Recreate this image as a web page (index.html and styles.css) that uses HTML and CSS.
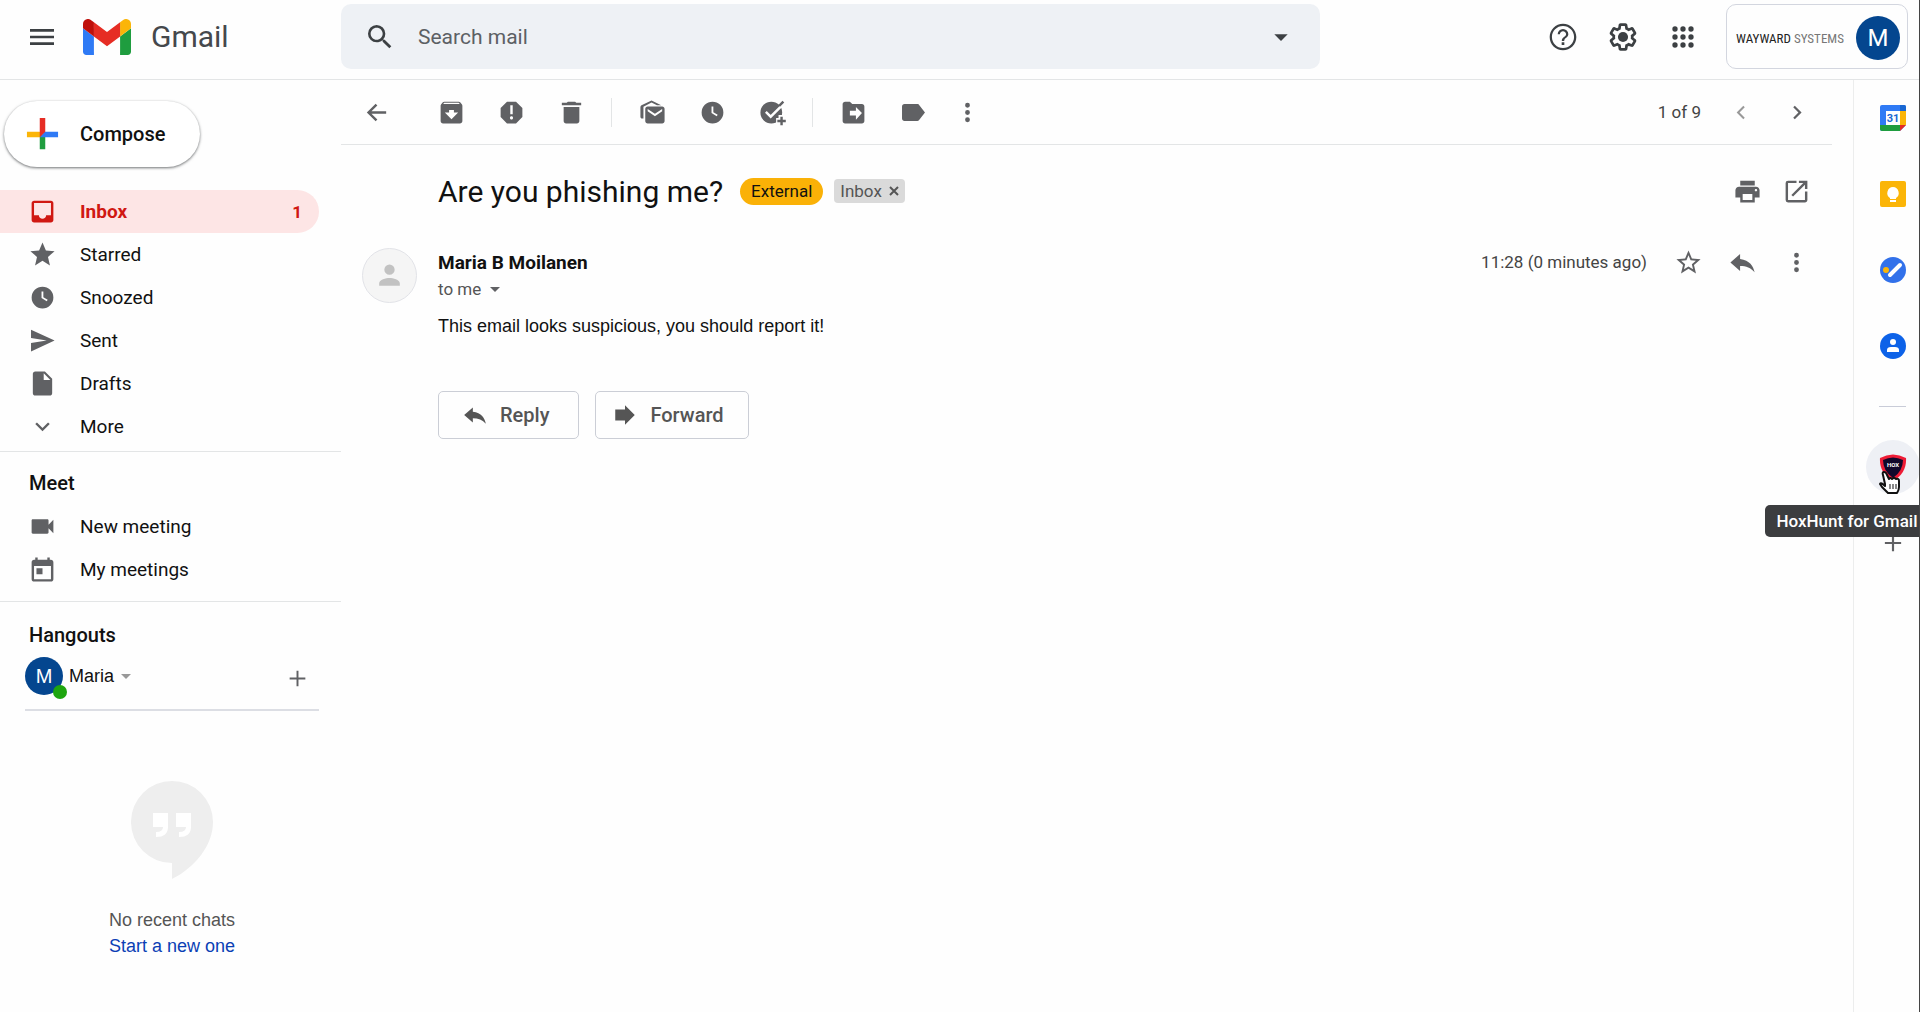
FILE: index.html
```html
<!DOCTYPE html>
<html lang="en">
<head>
    <meta charset="UTF-8">
    <meta name="viewport" content="width=device-width, initial-scale=1.0">
    <title>Are you phishing me? - Gmail</title>
    <link rel="stylesheet" href="styles.css">
</head>
<body>
    <!-- Top bar -->
    <header class="topbar">
        <div class="brand">
            <button class="icon-btn" aria-label="Main menu">
                <svg class="icon-lg" viewBox="0 0 24 24"><path d="M3 18h18v-2H3v2zm0-5h18v-2H3v2zm0-7v2h18V6H3z"/></svg>
            </button>
            <a class="logo" href="#">
                <svg class="logo-mark" viewBox="52 42 88 66">
                    <path fill="#2f7af5" d="M58 108h14V74L52 59v43c0 3.320 2.690 6 6 6"/>
                    <path fill="#1f9d3f" d="M120 108h14c3.320 0 6-2.690 6-6V59l-20 15"/>
                    <path fill="#fbb508" d="M120 48v26l20-15v-8c0-7.420-8.470-11.650-14.400-7.200"/>
                    <path fill="#e62d24" d="M72 74V48l24 18 24-18v26L96 92"/>
                    <path fill="#bf100b" d="M52 51v8l20 15V48l-5.600-4.200c-5.940-4.450-14.400-.22-14.400 7.200"/>
                </svg>
                <span>Gmail</span>
            </a>
        </div>
        <form class="search">
            <button class="icon-btn" type="button" aria-label="Search">
                <svg class="icon-lg" viewBox="0 0 24 24"><path d="M15.500 14h-.79l-.28-.27A6.470 6.470 0 0 0 16 9.500 6.500 6.500 0 1 0 9.500 16c1.610 0 3.090-.59 4.230-1.570l.27.28v.79l5 4.990L20.490 19l-4.990-5zm-6 0C7.010 14 5 11.990 5 9.500S7.010 5 9.500 5 14 7.010 14 9.500 11.990 14 9.500 14z"/></svg>
            </button>
            <input type="text" placeholder="Search mail" aria-label="Search mail">
            <button class="icon-btn" type="button" aria-label="Show search options">
                <svg class="icon-lg" viewBox="0 0 24 24"><path d="M7 10l5 5 5-5z"/></svg>
            </button>
        </form>
        <div class="top-actions">
            <button class="icon-btn" aria-label="Support">
                <svg class="icon-lg" viewBox="0 0 24 24"><path d="M11 18h2v-2h-2v2zm1-16C6.480 2 2 6.480 2 12s4.480 10 10 10 10-4.480 10-10S17.520 2 12 2zm0 18.300c-4.600 0-8.300-3.700-8.300-8.300S7.400 3.700 12 3.700s8.300 3.700 8.300 8.300-3.700 8.300-8.300 8.300zM12 6a4 4 0 0 0-4 4h1.700c0-1.270 1.030-2.300 2.300-2.300s2.300 1.030 2.300 2.300c0 2-3.200 1.900-3.200 5h1.800c0-2.250 3.100-2.500 3.100-5a4 4 0 0 0-4-4z"/></svg>
            </button>
            <button class="icon-btn" aria-label="Settings">
                <svg class="icon-lg" viewBox="0 0 24 24"><path d="M13.850 22.250h-3.700c-.74 0-1.360-.54-1.450-1.270l-.27-1.890c-.27-.14-.53-.29-.79-.46l-1.800.72c-.7.26-1.470-.03-1.810-.65L2.200 15.530c-.35-.66-.2-1.440.36-1.880l1.530-1.190c-.01-.15-.02-.3-.02-.46 0-.15.010-.31.020-.46l-1.520-1.190c-.59-.45-.74-1.260-.37-1.880l1.850-3.190c.34-.62 1.110-.9 1.790-.63l1.810.73c.26-.17.52-.32.78-.46l.27-1.910c.09-.7.710-1.250 1.440-1.250h3.700c.74 0 1.360.54 1.450 1.270l.27 1.890c.27.14.53.29.79.46l1.800-.72c.71-.26 1.480.03 1.820.65l1.840 3.180c.36.66.2 1.440-.36 1.880l-1.520 1.190c.01.15.02.3.02.46s-.01.31-.02.46l1.520 1.190c.56.45.72 1.230.37 1.860l-1.860 3.220c-.34.62-1.110.9-1.800.63l-1.800-.72c-.26.17-.52.32-.78.46l-.27 1.910c-.1.680-.72 1.220-1.460 1.220zm-3.230-2h2.760l.37-2.550.53-.22c.44-.18.88-.44 1.340-.78l.45-.34 2.380.96 1.380-2.400-2.030-1.580.07-.56c.03-.26.06-.51.06-.78s-.03-.53-.06-.78l-.07-.56 2.030-1.580-1.390-2.400-2.390.96-.45-.35c-.42-.32-.87-.58-1.330-.77l-.52-.22-.37-2.550h-2.760l-.37 2.550-.53.210c-.44.190-.88.440-1.340.79l-.45.330-2.380-.95-1.390 2.390 2.030 1.580-.07.56a7 7 0 0 0-.06.79c0 .26.02.53.06.78l.07.56-2.030 1.580 1.380 2.400 2.390-.96.45.35c.43.33.86.58 1.330.77l.53.220.38 2.550z"/><circle cx="12" cy="12" r="3.800"/></svg>
            </button>
            <button class="icon-btn" aria-label="Google apps">
                <svg class="icon-lg" viewBox="0 0 24 24"><path d="M6 8a2 2 0 1 0 0-4 2 2 0 0 0 0 4zm6 12a2 2 0 1 0 0-4 2 2 0 0 0 0 4zm-6 0a2 2 0 1 0 0-4 2 2 0 0 0 0 4zm0-6a2 2 0 1 0 0-4 2 2 0 0 0 0 4zm6 0a2 2 0 1 0 0-4 2 2 0 0 0 0 4zm6-6a2 2 0 1 0 0-4 2 2 0 0 0 0 4zm-6 0a2 2 0 1 0 0-4 2 2 0 0 0 0 4zm6 6a2 2 0 1 0 0-4 2 2 0 0 0 0 4zm0 6a2 2 0 1 0 0-4 2 2 0 0 0 0 4z"/></svg>
            </button>
        </div>
        <button class="account">
            <span class="company"><b>WAYWARD</b> SYSTEMS</span>
            <span class="avatar">M</span>
        </button>
    </header>

    <div class="page">
        <!-- Left navigation -->
        <aside class="sidebar">
            <button class="compose">
                <svg viewBox="0 0 36 36"><path fill="#1f9d3f" d="M15 16v18h6V20z"/><path fill="#2f7af5" d="M35 15H20l-5 6h20z"/><path fill="#fbb508" d="M1 15v6h14l2-3-2-3z"/><path fill="#e62d24" d="M15 0v21l6-6V0z"/></svg>
                Compose
            </button>
            <nav class="nav">
                <a class="nav-item active" href="#">
                    <svg class="icon" viewBox="0 0 24 24"><path d="M19 3H5c-1.100 0-2 .9-2 2v14c0 1.100.9 2 2 2h14c1.100 0 2-.9 2-2V5c0-1.100-.9-2-2-2zm0 12h-4c0 1.660-1.350 3-3 3s-3-1.340-3-3H5V5h14v10z"/></svg>
                    <span>Inbox</span><span class="count">1</span>
                </a>
                <a class="nav-item" href="#">
                    <svg class="icon" viewBox="0 0 24 24"><path d="M12 17.270L18.180 21l-1.640-7.030L22 9.240l-7.190-.61L12 2 9.190 8.630 2 9.240l5.460 4.730L5.820 21z"/></svg>
                    <span>Starred</span>
                </a>
                <a class="nav-item" href="#">
                    <svg class="icon" viewBox="0 0 24 24"><path fill-rule="evenodd" d="M12 3a9 9 0 1 0 0 18 9 9 0 0 0 0-18zm-.8 4v5.500l4.300 2.600.8-1.200-3.600-2.200V7z"/></svg>
                    <span>Snoozed</span>
                </a>
                <a class="nav-item" href="#">
                    <svg class="icon" viewBox="0 0 24 24"><path d="M2.500 21L22 12 2.500 3v7l13 2-13 2z"/></svg>
                    <span>Sent</span>
                </a>
                <a class="nav-item" href="#">
                    <svg class="icon" viewBox="0 0 24 24"><path d="M6 2c-1.100 0-2 .9-2 2v16c0 1.100.9 2 2 2h12c1.100 0 2-.9 2-2V8l-6-6H6zm7 7V3.500L18.500 9H13z"/></svg>
                    <span>Drafts</span>
                </a>
                <a class="nav-item" href="#">
                    <svg class="icon" viewBox="0 0 24 24"><path d="M16.590 8.590L12 13.170 7.410 8.590 6 10l6 6 6-6z"/></svg>
                    <span>More</span>
                </a>
            </nav>

            <section class="side-section">
                <h2>Meet</h2>
                <a class="nav-item" href="#">
                    <svg class="icon" viewBox="0 0 24 24"><path d="M17 10.500V7c0-.55-.45-1-1-1H4c-.55 0-1 .45-1 1v10c0 .55.45 1 1 1h12c.55 0 1-.45 1-1v-3.500l4 4v-11l-4 4z"/></svg>
                    <span>New meeting</span>
                </a>
                <a class="nav-item" href="#">
                    <svg class="icon" viewBox="0 0 24 24"><path d="M19 4h-1V2h-2v2H8V2H6v2H5c-1.110 0-2 .9-2 2v14c0 1.100.89 2 2 2h14c1.100 0 2-.9 2-2V6c0-1.100-.9-2-2-2zm0 16H5V9h14v11zM7 11h5v5H7z"/></svg>
                    <span>My meetings</span>
                </a>
            </section>

            <section class="side-section hangouts">
                <h2>Hangouts</h2>
                <div class="chat-user">
                    <span class="avatar small">M<i class="status"></i></span>
                    <span class="chat-name">Maria</span>
                    <i class="caret light"></i>
                    <button class="icon-btn" aria-label="New conversation">
                        <svg class="icon" viewBox="0 0 24 24"><path d="M18.500 12.800h-5.700v5.700h-1.600v-5.700H5.500v-1.600h5.700V5.500h1.600v5.700h5.700z"/></svg>
                    </button>
                </div>
                <div class="no-chats">
                    <svg viewBox="0 0 82 98"><path fill="#eeeeee" d="M41 0a41 41 0 1 0 0 82v16c22-11 41-33 41-57A41 41 0 0 0 41 0z"/><path fill="#fff" d="M22 32h15v14q0 10-12 10v-5q7 0 7-5H22zM45 32h15v14q0 10-12 10v-5q7 0 7-5H45z"/></svg>
                    <p>No recent chats</p>
                    <a href="#">Start a new one</a>
                </div>
            </section>
        </aside>

        <!-- Opened conversation -->
        <main class="mail">
            <div class="toolbar">
                <button class="icon-btn back" aria-label="Back to Inbox">
                    <svg class="icon" viewBox="0 0 24 24"><path d="M20 11H7.830l4.880-4.880L11.300 4.700 4 12l7.300 7.300 1.410-1.410L7.830 13H20z"/></svg>
                </button>
                <div class="group">
                    <button class="icon-btn" aria-label="Archive">
                        <svg class="icon" viewBox="0 0 24 24"><path d="M20.540 5.230l-1.390-1.680C18.880 3.210 18.470 3 18 3H6c-.47 0-.88.21-1.160.55L3.460 5.230C3.170 5.570 3 6.020 3 6.500V19c0 1.100.9 2 2 2h14c1.100 0 2-.9 2-2V6.500c0-.48-.17-.93-.46-1.270zM12 17.500L6.500 12H10v-2h4v2h3.500L12 17.500zM5.120 5l.81-1h12l.94 1H5.120z"/></svg>
                    </button>
                    <button class="icon-btn" aria-label="Report spam">
                        <svg class="icon" viewBox="0 0 24 24"><path d="M15.730 3H8.270L3 8.270v7.460L8.270 21h7.460L21 15.730V8.270L15.730 3zM12 17.800c-.72 0-1.300-.58-1.300-1.300s.58-1.300 1.300-1.300 1.300.58 1.300 1.300-.58 1.300-1.300 1.300zm1-4.300h-2V6h2v7.500z"/></svg>
                    </button>
                    <button class="icon-btn" aria-label="Delete">
                        <svg class="icon" viewBox="0 0 24 24"><path d="M5.500 19c0 1.100.9 2 2 2h9c1.100 0 2-.9 2-2V7.500h-13V19zM20 4h-4l-1-1H9L8 4H4v2h16V4z"/></svg>
                    </button>
                </div>
                <div class="group">
                    <button class="icon-btn" aria-label="Mark as unread">
                        <svg class="icon" viewBox="0 0 24 24"><path d="M20 7H8c-1.100 0-2 .9-2 2v10c0 1.100.9 2 2 2h12c1.100 0 2-.9 2-2V9c0-1.100-.9-2-2-2zm0 4l-6 4-6-4V9l6 4 6-4zM4.500 17H3.500C2.600 17 2 16.400 2 15.500V7.600c0-.7.300-1.200.9-1.500L11.200 2l8 4h-3.500l-4.500-2.200-6.700 3.500z"/></svg>
                    </button>
                    <button class="icon-btn" aria-label="Snooze">
                        <svg class="icon" viewBox="0 0 24 24"><path fill-rule="evenodd" d="M12 3a9 9 0 1 0 0 18 9 9 0 0 0 0-18zm-.8 4v5.500l4.300 2.600.8-1.200-3.600-2.200V7z"/></svg>
                    </button>
                    <button class="icon-btn" aria-label="Add to tasks">
                        <svg class="icon" viewBox="0 0 24 24"><circle cx="11" cy="12" r="9"/><path class="cut wide" d="M15 19h8M19.500 14v8"/><path class="cut" d="M6.500 11.500l4 4L22 4"/><path class="line" d="M17.500 6.500L21 3M19.500 15.500v7M16 19h7"/></svg>
                    </button>
                </div>
                <div class="group last">
                    <button class="icon-btn" aria-label="Move to">
                        <svg class="icon" viewBox="0 0 24 24"><path d="M19 5h-8L9 3H5c-1.100 0-2 .9-2 2v14c0 1.100.9 2 2 2h14c1.100 0 2-.9 2-2V7c0-1.100-.9-2-2-2zm-5 13v-3.500H9v-4h5V7.500l5 5z"/></svg>
                    </button>
                    <button class="icon-btn" aria-label="Labels">
                        <svg class="icon" viewBox="0 0 24 24"><path d="M16.500 5.500C16.200 5.100 15.700 5 15.200 5H4.500c-1.100 0-2 .9-2 2v10c0 1.100.9 2 2 2h10.700c.5 0 1-.2 1.300-.6L21.500 12z"/></svg>
                    </button>
                </div>
                <button class="icon-btn more" aria-label="More">
                    <svg class="icon" viewBox="0 0 24 24"><path d="M12 8a2 2 0 1 0 0-4 2 2 0 0 0 0 4zm0 2a2 2 0 1 0 0 4 2 2 0 0 0 0-4zm0 6a2 2 0 1 0 0 4 2 2 0 0 0 0-4z"/></svg>
                </button>
                <div class="pager">
                    <span>1 of 9</span>
                    <button class="icon-btn newer" aria-label="Newer">
                        <svg class="icon" viewBox="0 0 24 24"><path d="M14.700 16.300L10.400 12l4.300-4.300-1.200-1.200L8 12l5.500 5.500z"/></svg>
                    </button>
                    <button class="icon-btn" aria-label="Older">
                        <svg class="icon" viewBox="0 0 24 24"><path d="M9.300 16.300l4.300-4.300-4.300-4.300 1.300-1.300L16.200 12l-5.600 5.600z"/></svg>
                    </button>
                </div>
            </div>

            <div class="subject">
                <h1>Are you phishing me?</h1>
                <span class="tag external">External</span>
                <span class="tag">Inbox
                    <button aria-label="Remove label Inbox"><svg viewBox="0 0 10 10"><path d="M1 1l8 8M9 1L1 9"/></svg></button>
                </span>
                <div class="actions">
                    <button class="icon-btn" aria-label="Print all">
                        <svg class="icon" viewBox="0 0 24 24"><path d="M19 8H5c-1.660 0-3 1.340-3 3v6h4v4h12v-4h4v-6c0-1.660-1.340-3-3-3zm-3 11H8v-5h8v5zm3-7c-.55 0-1-.45-1-1s.45-1 1-1 1 .45 1 1-.45 1-1 1zm-1-9H6v4h12V3z"/></svg>
                    </button>
                    <button class="icon-btn" aria-label="In new window">
                        <svg class="icon" viewBox="0 0 24 24"><path d="M19 19H5V5h7V3H5a2 2 0 0 0-2 2v14a2 2 0 0 0 2 2h14c1.100 0 2-.9 2-2v-7h-2v7zM14 3v2h3.590l-9.830 9.830 1.410 1.410L19 6.410V10h2V3h-7z"/></svg>
                    </button>
                </div>
            </div>

            <article class="message">
                <div class="sender-photo">
                    <svg viewBox="0 0 24 24"><path d="M12 11.500a4 4 0 1 0 0-8 4 4 0 0 0 0 8zm0 2.500c-2.700 0-8 1.300-8 4.200V20h16v-1.800c0-2.900-5.300-4.200-8-4.200z"/></svg>
                </div>
                <div class="content">
                    <div class="message-head">
                        <h3>Maria B Moilanen</h3>
                        <time>11:28 (0 minutes ago)</time>
                        <div class="actions">
                            <button class="icon-btn" aria-label="Star">
                                <svg class="icon" viewBox="0 0 24 24"><path d="M22 9.240l-7.190-.62L12 2 9.190 8.630 2 9.240l5.460 4.730L5.820 21 12 17.270 18.180 21l-1.630-7.030L22 9.240zM12 15.400l-3.760 2.270 1-4.280-3.320-2.880 4.380-.38L12 6.100l1.710 4.040 4.380.38-3.320 2.880 1 4.280L12 15.400z"/></svg>
                            </button>
                            <button class="icon-btn" aria-label="Reply">
                                <svg class="icon" viewBox="0 0 24 24"><path d="M10 9V5l-8 7 8 7v-4.100c5 0 9 1.600 12 5.100-1-5-4-10-12-11z"/></svg>
                            </button>
                            <button class="icon-btn" aria-label="More">
                                <svg class="icon" viewBox="0 0 24 24"><path d="M12 8a2 2 0 1 0 0-4 2 2 0 0 0 0 4zm0 2a2 2 0 1 0 0 4 2 2 0 0 0 0-4zm0 6a2 2 0 1 0 0 4 2 2 0 0 0 0-4z"/></svg>
                            </button>
                        </div>
                    </div>
                    <div class="recipient">to me <i class="caret"></i></div>
                    <p class="text">This email looks suspicious, you should report it!</p>
                    <div class="answer">
                        <button class="reply">
                            <svg class="icon-sm" viewBox="0 0 24 24"><path d="M10 9V5l-8 7 8 7v-4.100c5 0 9 1.600 12 5.100-1-5-4-10-12-11z"/></svg>
                            Reply
                        </button>
                        <button class="forward">
                            <svg class="icon-sm" viewBox="0 0 24 24"><path d="M12 7V3l9 9-9 9v-4H3V7z"/></svg>
                            Forward
                        </button>
                    </div>
                </div>
            </article>
        </main>

        <!-- Add-ons panel -->
        <aside class="addons">
            <button class="icon-btn" aria-label="Calendar">
                <svg viewBox="0 0 26 26"><rect width="26" height="26" rx="2" fill="#2f7af5"/><path fill="#1967d2" d="M20 0h4q2 0 2 2v4h-6z"/><path fill="#fbb508" d="M20 6h6v14h-6z"/><path fill="#1f9d3f" d="M0 20h20v6H2q-2 0-2-2z"/><path fill="#fefefe" d="M6 6h14v14H6zM20 26l6-6v6z"/><path fill="#e62d24" d="M20 20h6l-6 6z"/><text x="13" y="17" class="cal-day">31</text></svg>
            </button>
            <button class="icon-btn" aria-label="Keep">
                <svg viewBox="0 0 26 26"><rect width="26" height="26" rx="2" fill="#fbb508"/><path fill="#fff" d="M13 6a6 6 0 0 0-3 11v1h6v-1a6 6 0 0 0-3-11zM10 19h6v2h-6z"/></svg>
            </button>
            <button class="icon-btn" aria-label="Tasks">
                <svg viewBox="0 0 26 26"><circle cx="13" cy="13" r="13" fill="#3271ea"/><path d="M10 18L20 8" stroke="#fff" stroke-width="4" stroke-linecap="round"/><circle cx="6" cy="13" r="3" fill="#fbb508"/></svg>
            </button>
            <button class="icon-btn" aria-label="Contacts">
                <svg viewBox="0 0 26 26"><circle cx="13" cy="13" r="13" fill="#0d62e8"/><circle cx="13" cy="9" r="3" fill="#fff"/><path fill="#fff" d="M7 19v-2q0-3 4-3h4q4 0 4 3v2z"/></svg>
            </button>
            <hr>
            <div class="hox">
                <button class="hox-btn" aria-describedby="hox-tip" aria-label="HoxHunt for Gmail">
                    <svg viewBox="0 0 28 28"><path fill="#ee1c36" d="M1 5Q14-2 27 5 28 20 14 28 0 20 1 5z"/><path fill="#11082b" d="M4 7q10-5 20 0 0 11-10 18Q4 18 4 7z"/><text x="14" y="14" class="hox-text">HOX</text></svg>
                </button>
                <svg class="pointer" viewBox="0 0 22 24"><path fill="#fff" stroke="#111" stroke-width="2" stroke-linejoin="round" d="M6 13L4 4q-1-3 1-3t3 3l2 4q1-2 3 0 2-2 4 0 3-1 3 2v6q0 3-2 6H9l-6-6-2-3q1-2 5 2z"/><path stroke="#111" stroke-width="1" d="M11 13v5M14 13v5M17 13v5"/></svg>
                <span class="tooltip" id="hox-tip" role="tooltip">HoxHunt for Gmail</span>
            </div>
            <button class="icon-btn" aria-label="Get add-ons">
                <svg class="icon" viewBox="0 0 24 24"><path d="M19.500 13h-6.500v6.500h-2V13H4.500v-2H11V4.500h2V11h6.500z"/></svg>
            </button>
        </aside>
    </div>
</body>
</html>
```
FILE: styles.css
```css
* {
    box-sizing: border-box;
}
body {
    margin: 0;
    min-height: 100vh;
    display: flex;
    flex-direction: column;
    overflow-x: hidden;
    font-family: Roboto, Arial, sans-serif;
    font-size: 19px;
    color: #111;
    background-color: #fefefe;
    border-right: 1px solid #444;
}
h1, h2, h3, p {
    margin: 0;
    font-weight: normal;
}
a {
    color: inherit;
    text-decoration: none;
}
button {
    font: inherit;
    color: inherit;
    background: none;
    border: none;
    padding: 0;
    cursor: pointer;
}
svg {
    display: block;
    flex: none;
    fill: currentColor;
}
.icon {
    width: 29px;
    height: 29px;
}
.icon-lg {
    width: 32px;
    height: 32px;
}
.icon-sm {
    width: 26px;
    height: 26px;
}
.icon-btn {
    display: flex;
    align-items: center;
    justify-content: center;
    flex: none;
    color: #606164;
}
.caret {
    width: 0;
    height: 0;
    border: 5px solid transparent;
    border-top-color: #606164;
    border-bottom: none;
}
.caret.light {
    border-top-color: #999;
}

/* Top bar */
.topbar {
    display: flex;
    align-items: flex-start;
    height: 80px;
    padding: 4px 11px 0 0;
    border-bottom: 1px solid #e3e5e6;
}
.topbar .icon-btn {
    color: #3c4043;
}
.brand {
    display: flex;
    align-items: center;
    gap: 25px;
    width: 341px;
    height: 65px;
    padding-left: 26px;
}
.logo {
    display: flex;
    align-items: center;
    gap: 20px;
    font-size: 30px;
    color: #45484c;
}
.logo-mark {
    width: 48px;
    height: 36px;
}
.search {
    display: flex;
    align-items: center;
    flex: 1;
    max-width: 979px;
    height: 65px;
    padding: 0 23px;
    background-color: #eef1f5;
    border-radius: 10px;
}
.search input {
    flex: 1;
    min-width: 0;
    margin-left: 22px;
    padding: 0;
    border: none;
    outline: none;
    background: none;
    font: inherit;
    font-size: 21px;
    color: #111;
}
.search input::placeholder {
    color: #5c6064;
    opacity: 1;
}
.top-actions {
    display: flex;
    align-items: center;
    gap: 28px;
    height: 65px;
    margin-left: auto;
}
.account {
    display: flex;
    align-items: center;
    justify-content: space-between;
    width: 182px;
    height: 65px;
    margin-left: 27px;
    padding: 3px 7px 0 9px;
    border: 1px solid #d3d6df;
    border-radius: 10px;
}
.company {
    font-family: "Liberation Sans Narrow", "Roboto Condensed", Roboto, sans-serif;
    font-size: 13px;
    white-space: nowrap;
    color: #777;
}
.company b {
    font-weight: normal;
    color: #222;
}
.avatar {
    position: relative;
    display: flex;
    align-items: center;
    justify-content: center;
    flex: none;
    width: 44px;
    height: 44px;
    border-radius: 50%;
    background-color: #04468f;
    color: #fff;
    font-size: 24px;
}
.avatar.small {
    width: 38px;
    height: 38px;
    font-size: 20px;
}
.status {
    position: absolute;
    right: -4px;
    bottom: -4px;
    width: 14px;
    height: 14px;
    border-radius: 50%;
    background-color: #1ea50f;
}

/* Columns */
.page {
    display: flex;
    flex: 1;
}
.sidebar {
    flex: none;
    width: 341px;
    padding-top: 21px;
}
.compose {
    display: flex;
    align-items: center;
    gap: 21px;
    height: 66px;
    margin: 0 0 23px 4px;
    padding: 0 35px 0 22px;
    border-radius: 33px;
    background-color: #fff;
    font-weight: 500;
    font-size: 20px;
    box-shadow: 0 1px 3px rgba(60, 64, 67, 0.6), 0 1px 2px rgba(60, 64, 67, 0.2);
}
.compose svg {
    width: 33px;
    height: 33px;
}
.nav {
    padding-bottom: 3px;
}
.nav-item {
    display: flex;
    align-items: center;
    gap: 23px;
    height: 43px;
    margin-right: 22px;
    padding: 0 17px 0 28px;
    border-radius: 0 22px 22px 0;
}
.nav-item .icon {
    color: #606164;
}
.nav-item.active {
    background-color: #fde5e5;
    color: #d01812;
    font-weight: bold;
}
.nav-item.active .icon {
    color: #d01812;
}
.count {
    margin-left: auto;
    font-size: 17px;
}
.side-section {
    padding: 10px 0;
    border-top: 1px solid #e3e5e6;
}
.side-section h2 {
    height: 43px;
    padding-left: 29px;
    font-weight: 500;
    font-size: 20px;
    line-height: 43px;
}
.hangouts {
    padding: 12px 0;
    font-family: "Liberation Sans", Arial, sans-serif;
}
.hangouts h2 {
    font-family: Roboto, sans-serif;
}
.chat-user {
    display: flex;
    align-items: center;
    height: 54px;
    margin: 0 22px 0 25px;
    padding-bottom: 14px;
    border-bottom: 2px solid #dcdee4;
}
.chat-name {
    margin: 0 7px 0 6px;
    font-size: 18px;
}
.chat-user .icon-btn {
    margin: 4px 7px 0 auto;
}
.no-chats {
    display: flex;
    flex-direction: column;
    align-items: center;
    gap: 6px;
    margin: 70px 0 0 3px;
    font-size: 18px;
    line-height: 20px;
    color: #555;
}
.no-chats svg {
    width: 82px;
    height: 98px;
    margin-bottom: 25px;
}
.no-chats a {
    color: #0b3fb5;
}

/* Conversation */
.mail {
    flex: 1;
    min-width: 0;
    padding-right: 21px;
}
.toolbar {
    display: flex;
    align-items: center;
    height: 65px;
    padding: 0 21px;
    border-bottom: 1px solid #e3e5e6;
}
.toolbar .back {
    margin-right: 46px;
}
.group {
    display: flex;
    align-items: center;
    gap: 31px;
    margin-right: 26px;
    padding-right: 25px;
    border-right: 1px solid #e3e5e6;
}
.group.last {
    margin-right: 25px;
    padding-right: 0;
    border: none;
}
.icon .cut {
    fill: none;
    stroke: #fefefe;
    stroke-width: 2;
}
.icon .wide {
    stroke-width: 5;
}
.icon .line {
    fill: none;
    stroke: currentColor;
    stroke-width: 2;
}
.pager {
    display: flex;
    align-items: center;
    gap: 26px;
    margin-left: auto;
    font-size: 17px;
    color: #444;
}
.newer {
    color: #999;
}
.subject {
    display: flex;
    align-items: center;
    gap: 11px;
    height: 92px;
    padding: 0 21px 0 97px;
}
.subject h1 {
    margin-right: 6px;
    font-size: 30px;
}
.tag {
    display: flex;
    align-items: center;
    gap: 7px;
    height: 24px;
    padding: 0 6px;
    border-radius: 4px;
    background-color: #dadada;
    font-size: 17px;
    color: #555;
}
.tag.external {
    height: 27px;
    padding: 0 11px;
    border-radius: 14px;
    background-color: #fab107;
    color: #111;
}
.tag svg {
    width: 10px;
    height: 10px;
    stroke: currentColor;
    stroke-width: 2;
}
.actions {
    display: flex;
    align-items: center;
    gap: 25px;
    margin-left: auto;
}
.subject .actions {
    gap: 20px;
}
.message {
    display: flex;
    gap: 21px;
    padding: 11px 21px 0;
}
.sender-photo {
    display: flex;
    align-items: center;
    justify-content: center;
    flex: none;
    width: 55px;
    height: 55px;
    border: 1px solid #e2e3e8;
    border-radius: 50%;
    background-color: #f5f5f5;
    color: #c2c2c2;
}
.sender-photo svg {
    width: 31px;
    height: 31px;
}
.content {
    flex: 1;
}
.message-head {
    display: flex;
    align-items: center;
    height: 28px;
}
.message-head h3 {
    font-weight: bold;
    font-size: 19px;
}
.message-head time {
    margin-left: auto;
    font-size: 17px;
    color: #444;
}
.message-head .actions {
    margin-left: 27px;
}
.recipient {
    display: flex;
    align-items: center;
    gap: 9px;
    height: 26px;
    font-size: 17px;
    color: #555;
}
.text {
    margin-top: 14px;
    font-family: "Liberation Sans", Arial, sans-serif;
    font-size: 18px;
    line-height: 20px;
}
.answer {
    display: flex;
    gap: 16px;
    margin-top: 55px;
    font-size: 20px;
    font-weight: 500;
    color: #555;
}
.answer button {
    display: flex;
    align-items: center;
    gap: 12px;
    height: 48px;
    border: 1px solid #cbced6;
    border-radius: 5px;
}
.answer .reply {
    padding: 0 29px 0 23px;
}
.answer .forward {
    padding: 0 24px 0 16px;
}

/* Add-ons */
.addons {
    display: flex;
    flex-direction: column;
    align-items: center;
    flex: none;
    width: 66px;
    padding: 25px 0 0 12px;
    border-left: 1px solid #eceded;
}
.addons > .icon-btn {
    margin-bottom: 50px;
}
.addons > .icon-btn > svg {
    width: 26px;
    height: 26px;
}
.cal-day {
    font-size: 11px;
    font-weight: bold;
    fill: #1967d2;
    text-anchor: middle;
}
.addons hr {
    width: 27px;
    margin: -3px 0 33px;
    border: none;
    border-top: 1px solid #c9ccd8;
}
.hox {
    position: relative;
    margin-bottom: 36px;
}
.hox-btn {
    display: flex;
    align-items: center;
    justify-content: center;
    width: 54px;
    height: 54px;
    border-radius: 50%;
    background-color: #eef0f5;
}
.hox-btn svg {
    width: 28px;
    height: 28px;
}
.hox-text {
    font-size: 6px;
    font-weight: bold;
    fill: #fff;
    text-anchor: middle;
}
.pointer {
    position: absolute;
    top: 31px;
    left: 13px;
    width: 22px;
    height: 24px;
}
.tooltip {
    position: absolute;
    top: 65px;
    right: 0;
    height: 32px;
    padding: 0 2px 0 11px;
    border-radius: 5px 0 0 5px;
    background-color: #3c3d3f;
    color: #fff;
    font-size: 17px;
    font-weight: 500;
    line-height: 32px;
    white-space: nowrap;
}
```
